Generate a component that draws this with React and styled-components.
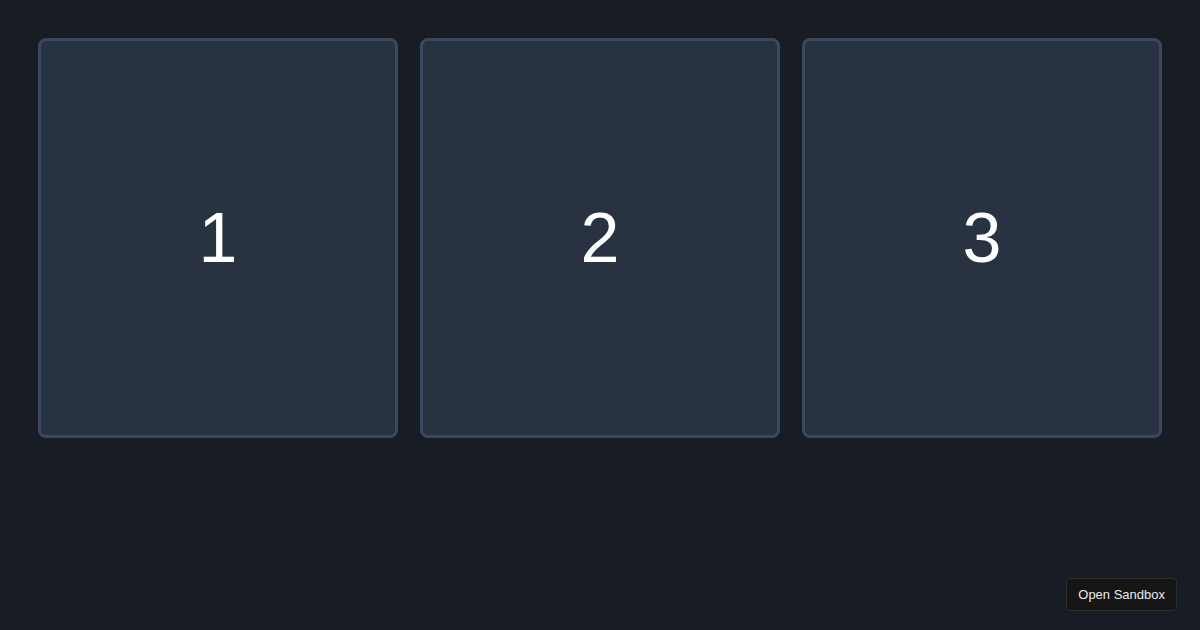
import React from "react";
import styled, { createGlobalStyle } from "styled-components";

const Global = createGlobalStyle`
  html, body { margin: 0; padding: 0; background: #181d25; }
  body { font-family: "Liberation Sans", Arial, sans-serif; }
`;

const Page = styled.div`
  width: 1200px;
  height: 630px;
  box-sizing: border-box;
  padding: 38px;
  background: #181d25;
`;

const Row = styled.div`
  display: grid;
  grid-template-columns: repeat(3, 1fr);
  gap: 22px;
`;

const Card = styled.div`
  height: 400px;
  box-sizing: border-box;
  border: 3px solid #3b495d;
  border-radius: 8px;
  background: #283241;
  display: flex;
  align-items: center;
  justify-content: center;
  color: #ffffff;
  font-size: 70px;
  line-height: 1;
`;

const SandboxButton = styled.button`
  position: fixed;
  right: 23px;
  bottom: 19px;
  height: 33px;
  padding: 0 11px;
  background: #151515;
  border: 1px solid #2f2f2f;
  border-radius: 4px;
  color: #e6e9ee;
  font-family: "Liberation Sans", Arial, sans-serif;
  font-size: 13px;
`;

export default function App() {
  return (
    <>
      <Global />
      <Page>
        <Row>
          {[1, 2, 3].map((n) => (
            <Card key={n}>{n}</Card>
          ))}
        </Row>
      </Page>
      <SandboxButton>Open Sandbox</SandboxButton>
    </>
  );
}
